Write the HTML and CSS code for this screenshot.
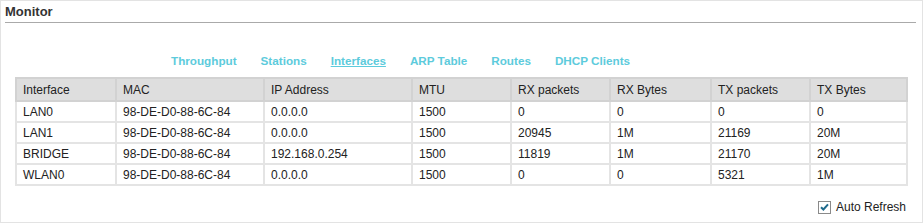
FILE: index.html
```html
<!DOCTYPE html>
<html>
<head>
<meta charset="utf-8">
<link rel="stylesheet" href="styles.css">
</head>
<body>
<div class="panel">
  <div class="title">Monitor</div>
  <nav class="tabs">
    <a class="tab">Throughput</a>
    <a class="tab">Stations</a>
    <a class="tab active">Interfaces</a>
    <a class="tab">ARP Table</a>
    <a class="tab">Routes</a>
    <a class="tab">DHCP Clients</a>
  </nav>
  <table class="grid">
    <colgroup>
      <col class="c1"><col class="c2"><col class="c3"><col class="c4"><col class="c5"><col class="c6"><col class="c7"><col class="c8">
    </colgroup>
    <thead>
      <tr><th>Interface</th><th>MAC</th><th>IP Address</th><th>MTU</th><th>RX packets</th><th>RX Bytes</th><th>TX packets</th><th>TX Bytes</th></tr>
    </thead>
    <tbody>
      <tr><td>LAN0</td><td>98-DE-D0-88-6C-84</td><td>0.0.0.0</td><td>1500</td><td>0</td><td>0</td><td>0</td><td>0</td></tr>
      <tr><td>LAN1</td><td>98-DE-D0-88-6C-84</td><td>0.0.0.0</td><td>1500</td><td>20945</td><td>1M</td><td>21169</td><td>20M</td></tr>
      <tr><td>BRIDGE</td><td>98-DE-D0-88-6C-84</td><td>192.168.0.254</td><td>1500</td><td>11819</td><td>1M</td><td>21170</td><td>20M</td></tr>
      <tr><td>WLAN0</td><td>98-DE-D0-88-6C-84</td><td>0.0.0.0</td><td>1500</td><td>0</td><td>0</td><td>5321</td><td>1M</td></tr>
    </tbody>
  </table>
  <div class="footer">
    <label class="refresh"><span class="check"><svg width="9" height="8" viewBox="0 0 9 8"><path d="M1 4.2 L3.4 6.5 L8 1.3" fill="none" stroke="#1e6a8c" stroke-width="2"/></svg></span>Auto Refresh</label>
  </div>
</div>
</body>
</html>
```
FILE: styles.css
```css
* { box-sizing: border-box; }
body {
  margin: 0;
  background: #fff;
  font-family: "Liberation Sans", Arial, sans-serif;
  font-size: 12px;
  color: #333;
}
.panel {
  width: 923px;
  height: 223px;
  border: 1px solid #e3e3e3;
  padding: 0 5px 0 4px;
}
.title {
  font-size: 13px;
  font-weight: bold;
  color: #333;
  height: 22px;
  padding-top: 3px;
  border-bottom: 1px solid #aaa;
  margin-right: 1px;
}
.tabs {
  display: flex;
  gap: 24px;
  padding-left: 166px;
  margin-top: 30px;
  height: 16px;
  line-height: 16px;
}
.tab {
  font-weight: bold;
  color: #5dcbdc;
  font-size: 11.7px;
  cursor: pointer;
}
.tab.active { text-decoration: underline; }
.grid {
  margin-top: 8px;
  margin-left: 10px;
  width: 891px;
  table-layout: fixed;
  border-collapse: collapse;
  border: 2px solid #dadada;
}
.c1 { width: 100px; }
.c2 { width: 148px; }
.c3 { width: 148px; }
.c4 { width: 99px; }
.c5 { width: 99px; }
.c6 { width: 101px; }
.c7 { width: 99px; }
.c8 { width: 97px; }
.grid th, .grid td {
  text-align: left;
  font-weight: normal;
  padding: 0 6px;
  border: 2px solid #e4e4e4;
  white-space: nowrap;
  color: #222;
}
.grid th {
  background: #dedede;
  height: 23px;
  border-color: #d2d2d2;
}
.grid td { height: 21px; }
.footer {
  display: flex;
  justify-content: flex-end;
  margin-top: 14px;
  padding-right: 11px;
}
.refresh {
  display: flex;
  align-items: center;
  gap: 5px;
  font-size: 12px;
  color: #222;
}
.check {
  width: 13px;
  height: 13px;
  border: 1px solid #8a8a8a;
  background: #fff;
  display: flex;
  align-items: center;
  justify-content: center;
}
```
